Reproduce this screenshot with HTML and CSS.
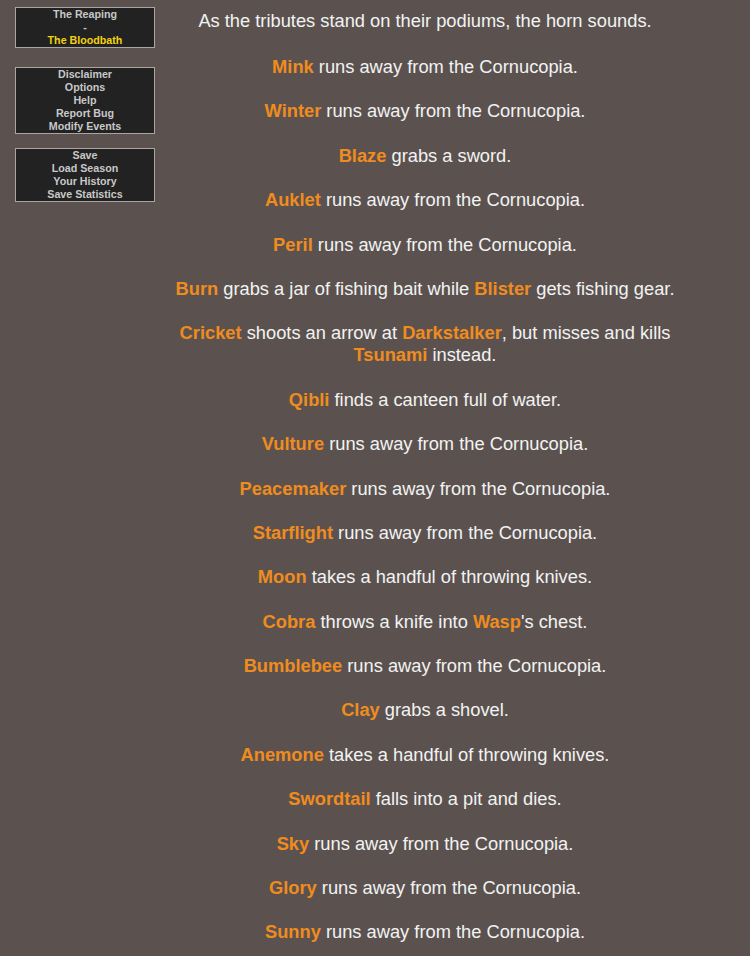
FILE: index.html
```html
<!DOCTYPE html>
<html lang="en">
<head>
  <meta charset="UTF-8">
  <meta name="viewport" content="width=device-width, initial-scale=1.0">
  <title>The Bloodbath</title>
  <link rel="stylesheet" href="styles.css">
</head>
<body>
  <div class="page">
    <!-- Left menu -->
    <div class="sidebar">
      <div class="menu-box">
        <a href="#">The Reaping</a>
        <span>-</span>
        <a href="#" class="current">The Bloodbath</a>
      </div>
      <div class="menu-box menu-gap">
        <a href="#">Disclaimer</a>
        <a href="#">Options</a>
        <a href="#">Help</a>
        <a href="#">Report Bug</a>
        <a href="#">Modify Events</a>
      </div>
      <div class="menu-box menu-gap-small">
        <a href="#">Save</a>
        <a href="#">Load Season</a>
        <a href="#">Your History</a>
        <a href="#">Save Statistics</a>
      </div>
    </div>

    <!-- Event log -->
    <div class="events">
      <p class="intro">As the tributes stand on their podiums, the horn sounds.</p>
      <p><b>Mink</b> runs away from the Cornucopia.</p>
      <p><b>Winter</b> runs away from the Cornucopia.</p>
      <p><b>Blaze</b> grabs a sword.</p>
      <p><b>Auklet</b> runs away from the Cornucopia.</p>
      <p><b>Peril</b> runs away from the Cornucopia.</p>
      <p><b>Burn</b> grabs a jar of fishing bait while <b>Blister</b> gets fishing gear.</p>
      <p><b>Cricket</b> shoots an arrow at <b>Darkstalker</b>, but misses and kills <b>Tsunami</b> instead.</p>
      <p><b>Qibli</b> finds a canteen full of water.</p>
      <p><b>Vulture</b> runs away from the Cornucopia.</p>
      <p><b>Peacemaker</b> runs away from the Cornucopia.</p>
      <p><b>Starflight</b> runs away from the Cornucopia.</p>
      <p><b>Moon</b> takes a handful of throwing knives.</p>
      <p><b>Cobra</b> throws a knife into <b>Wasp</b>'s chest.</p>
      <p><b>Bumblebee</b> runs away from the Cornucopia.</p>
      <p><b>Clay</b> grabs a shovel.</p>
      <p><b>Anemone</b> takes a handful of throwing knives.</p>
      <p><b>Swordtail</b> falls into a pit and dies.</p>
      <p><b>Sky</b> runs away from the Cornucopia.</p>
      <p><b>Glory</b> runs away from the Cornucopia.</p>
      <p><b>Sunny</b> runs away from the Cornucopia.</p>
    </div>
  </div>
</body>
</html>
```

FILE: styles.css
```css
body {
  margin: 0;
  background-color: #5b5250;
  font-family: "Liberation Sans", Arial, sans-serif;
}

.page {
  display: flex;
  align-items: flex-start;
  padding: 7px 0 0 15px;
}

/* Left menu boxes */
.sidebar {
  width: 140px;
  flex-shrink: 0;
}

.menu-box {
  display: flex;
  flex-direction: column;
  align-items: center;
  background-color: #222;
  border: 1px solid #a9a5a4;
  font-size: 10.7px;
  font-weight: bold;
  line-height: 13px;
}

.menu-box a,
.menu-box span {
  color: #c8c8c8;
  text-decoration: none;
}

.menu-box a.current {
  color: #f2d20f;
}

.menu-gap {
  margin-top: 19px;
}

.menu-gap-small {
  margin-top: 14px;
}

/* Event log */
.events {
  width: 520px;
  margin-left: 10px;
  padding-top: 3px;
  text-align: center;
  color: #f2f2f2;
  font-size: 18.3px;
  line-height: 22px;
}

.events p {
  margin: 0 0 22.4px;
}

.events p.intro {
  margin-bottom: 24px;
}

.events b {
  color: #f08c1e;
}
```
